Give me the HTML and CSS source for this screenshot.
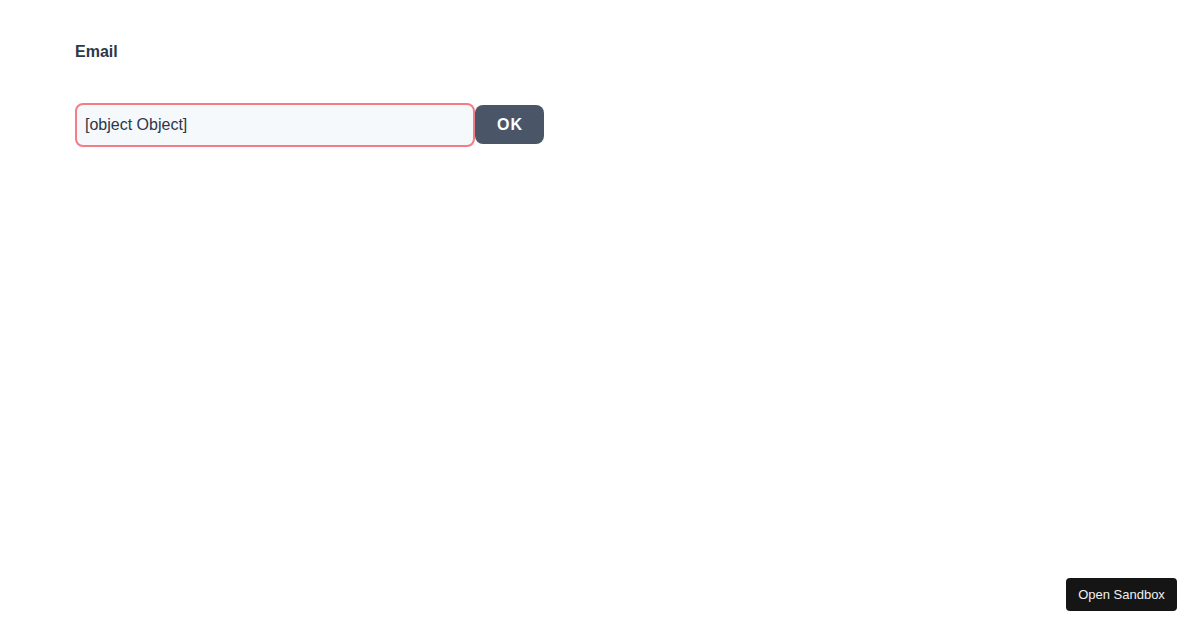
FILE: index.html
```html
<!DOCTYPE html>
<html>
<head>
<meta charset="utf-8">
<link rel="stylesheet" href="styles.css">
</head>
<body>
<main class="page">
  <label class="label" for="email">Email</label>
  <div class="row">
    <input id="email" class="field" type="text" value="[object Object]">
    <button class="ok">OK</button>
  </div>
</main>
<a class="sandbox">Open Sandbox</a>
</body>
</html>
```
FILE: styles.css
```css
html, body {
  margin: 0;
  padding: 0;
  background: #ffffff;
  font-family: "Liberation Sans", Arial, sans-serif;
  color: #2d3748;
}
.page {
  padding: 43px 0 0 75px;
  display: flex;
  flex-direction: column;
}
.label {
  font-size: 16px;
  font-weight: 700;
  line-height: 18px;
  color: #2d3748;
}
.row {
  margin-top: 42px;
  display: flex;
  align-items: flex-start;
}
.field {
  box-sizing: border-box;
  width: 400px;
  height: 44px;
  border: 2px solid #f47c86;
  border-radius: 8px;
  background: #f6f9fc;
  padding: 0 8px;
  font-family: "Liberation Sans", Arial, sans-serif;
  font-size: 16px;
  color: #2d3748;
  outline: none;
}
.ok {
  box-sizing: border-box;
  margin-top: 2px;
  width: 69px;
  height: 39px;
  border: none;
  border-radius: 8px;
  background: #4a5568;
  color: #ffffff;
  font-family: "Liberation Sans", Arial, sans-serif;
  font-size: 16px;
  font-weight: 700;
  letter-spacing: 1px;
  padding: 0 0 0 1px;
}
.sandbox {
  position: fixed;
  right: 23px;
  bottom: 19px;
  width: 111px;
  height: 33px;
  box-sizing: border-box;
  background: #151515;
  color: #f0f0f0;
  border-radius: 4px;
  font-size: 13px;
  display: flex;
  align-items: center;
  justify-content: center;
}
```
